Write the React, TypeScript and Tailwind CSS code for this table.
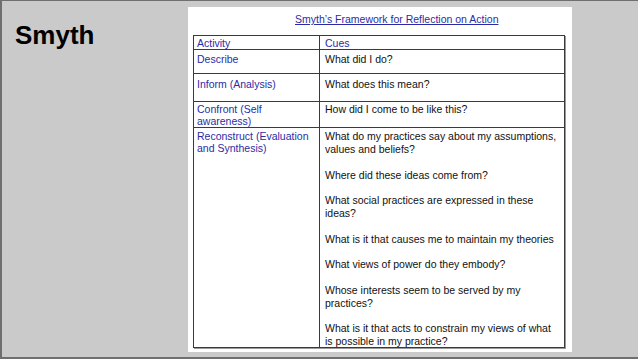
const font = { fontFamily: '"Liberation Sans", Arial, sans-serif' }

const cues: string[][] = [
    ['What do my practices say about my assumptions,', 'values and beliefs?'],
    ['Where did these ideas come from?'],
    ['What social practices are expressed in these', 'ideas?'],
    ['What is it that causes me to maintain my theories'],
    ['What views of power do they embody?'],
    ['Whose interests seem to be served by my', 'practices?'],
    ['What is it that acts to constrain my views of what', 'is possible in my practice?'],
]

function Row({ left, right, h, pt, blue }: { left: string[]; right: string[]; h: string; pt: string; blue?: boolean }) {
    return (
        <div className={`flex border-b border-[#3a3a3a] ${h}`}>
            <div className={`w-[126px] shrink-0 border-r border-[#3a3a3a] pl-[3px] text-[#2b2ba6] ${pt}`}>
                {left.map((l) => (
                    <div key={l}>{l}</div>
                ))}
            </div>
            <div className={`flex-1 pl-[5px] ${blue ? 'text-[#2b2ba6]' : 'text-[#111111]'} ${pt}`}>
                {right.map((l) => (
                    <div key={l}>{l}</div>
                ))}
            </div>
        </div>
    )
}

export default function App() {
    return (
        <div className="w-[638px] h-[359px] overflow-hidden bg-[#cacaca] border-t border-l-2 border-b-2 border-[#6f6f6f] flex" style={font}>
            <div className="w-[186px] shrink-0 pl-[13px] pt-[21px]">
                <h1 className="text-[26px] leading-none font-bold text-black">Smyth</h1>
            </div>
            <div className="mt-[6px] w-[384px] h-[345px] bg-white flex flex-col text-[10.5px] leading-[12px]">
                <div className="pt-[6px] pl-[107px] text-[#2b2ba6] underline leading-[13px]">
                    Smyth&rsquo;s Framework for Reflection on Action
                </div>
                <div className="ml-[5px] mt-[9px] w-[372px] border-t border-l border-r border-[#3a3a3a] shadow-[1px_1px_0_#9a9a9a]">
                    <Row left={['Activity']} right={['Cues']} h="h-[14px]" pt="pt-[1px]" blue />
                    <Row left={['Describe']} right={['What did I do?']} h="h-[24px]" pt="pt-[3px]" />
                    <Row left={['Inform (Analysis)']} right={['What does this mean?']} h="h-[28px]" pt="pt-[4px]" />
                    <Row left={['Confront (Self', 'awareness)']} right={['How did I come to be like this?']} h="h-[26px]" pt="pt-[1px]" />
                    <div className="flex border-b border-[#3a3a3a] h-[220px]">
                        <div className="w-[126px] shrink-0 border-r border-[#3a3a3a] pl-[3px] pt-[2px] text-[#2b2ba6] leading-[12px]">
                            <div>Reconstruct (Evaluation</div>
                            <div>and Synthesis)</div>
                        </div>
                        <div className="flex-1 pl-[5px] pt-[2px] text-[#111111] flex flex-col gap-[12.5px] leading-[13px]">
                            {cues.map((p) => (
                                <div key={p[0]}>
                                    {p.map((l) => (
                                        <div key={l}>{l}</div>
                                    ))}
                                </div>
                            ))}
                        </div>
                    </div>
                </div>
            </div>
        </div>
    )
}
